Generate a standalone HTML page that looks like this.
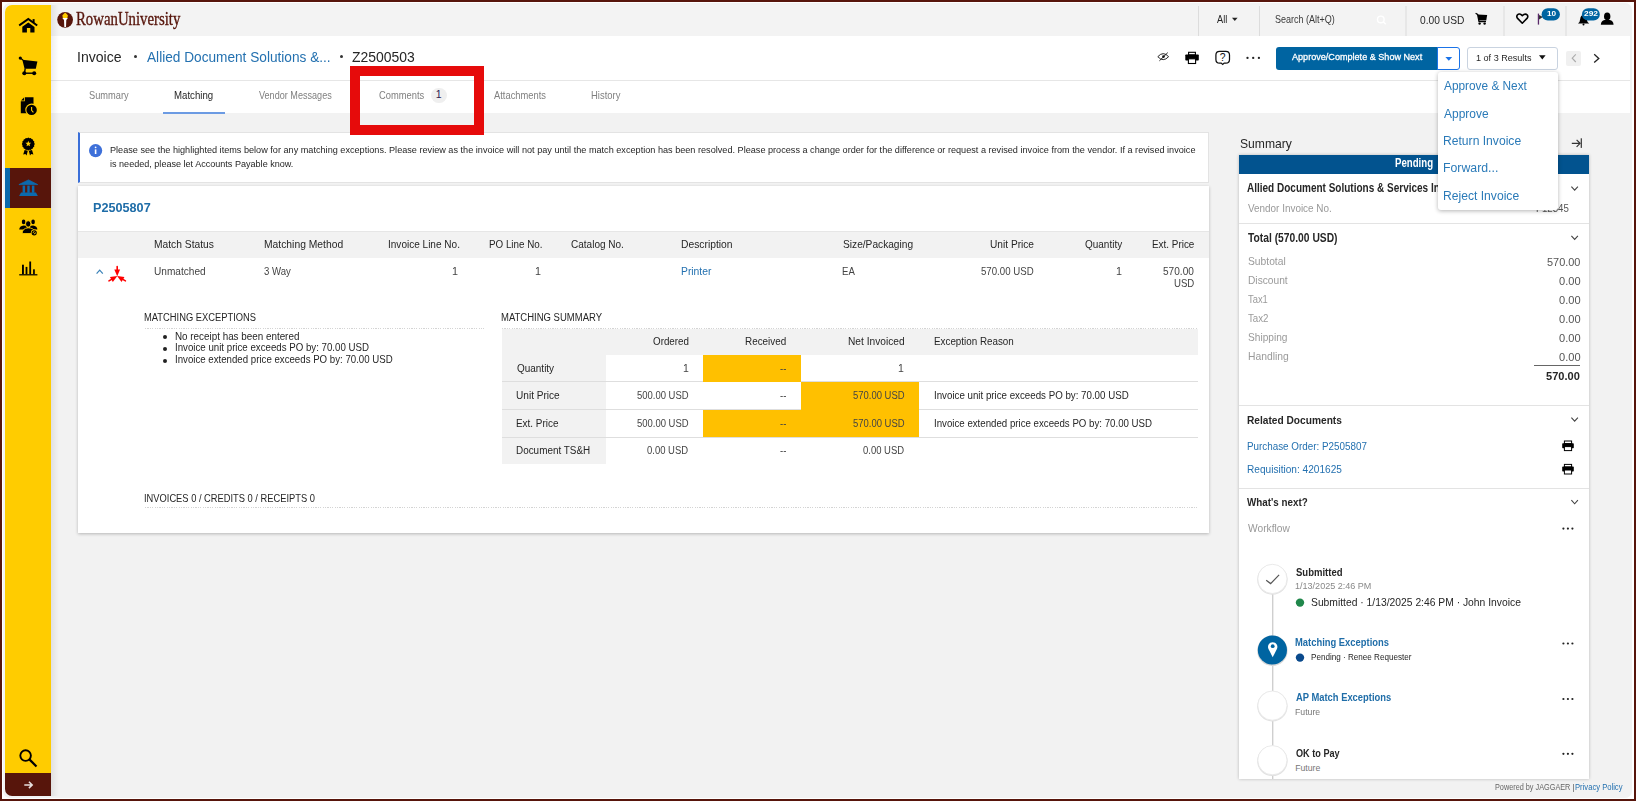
<!DOCTYPE html><html><head><meta charset="utf-8"><style>html,body{margin:0;padding:0;width:1636px;height:801px;overflow:hidden;position:relative}</style></head><body><div style="position:absolute;left:0px;top:0px;width:1636px;height:801px;background:#fff"></div>
<div style="position:absolute;left:3px;top:3px;width:1629px;height:795px;background:#f2f2f2;border-radius:7px"></div>
<div style="position:absolute;left:0px;top:0px;width:1636px;height:2px;background:#57150b"></div>
<div style="position:absolute;left:0px;top:799px;width:1636px;height:2px;background:#57150b"></div>
<div style="position:absolute;left:0px;top:0px;width:2px;height:801px;background:#57150b"></div>
<div style="position:absolute;left:1634px;top:0px;width:2px;height:801px;background:#57150b"></div>
<div style="position:absolute;left:51px;top:5px;width:1579px;height:31px;background:#f3f3f3;border-top-right-radius:6px"></div>
<div style="position:absolute;left:51px;top:36px;width:1579px;height:77px;background:#fff"></div>
<div style="position:absolute;left:51px;top:80px;width:1579px;height:1px;background:#e6e6e6"></div>
<div style="position:absolute;left:51px;top:113px;width:1579px;height:684px;background:#f2f2f2;border-bottom-right-radius:6px"></div>
<div style="position:absolute;left:5px;top:5px;width:46px;height:768px;background:#ffcc00;border-radius:7px 0 0 0"></div>
<div style="position:absolute;left:5px;top:168px;width:46px;height:40px;background:#57150b"></div>
<div style="position:absolute;left:5px;top:168px;width:5px;height:40px;background:#0b69ad"></div>
<div style="position:absolute;left:5px;top:773px;width:46px;height:23px;background:#57150b;border-bottom-left-radius:7px"></div>
<div style="position:absolute;left:51px;top:5px;width:8px;height:791px;background:linear-gradient(to right,rgba(0,0,0,0.07),rgba(0,0,0,0))"></div>
<div style="position:absolute;left:78px;top:132px;width:1131px;height:51px;background:#fff;border:1px solid #e3e3e3;border-left:2px solid #3a6fd8;box-sizing:border-box"></div>
<div style="position:absolute;left:78px;top:186px;width:1131px;height:347px;background:#fff;box-shadow:0 1px 3px rgba(0,0,0,0.25)"></div>
<div style="position:absolute;left:1239px;top:155px;width:350px;height:624px;background:#fff;box-shadow:0 0 3px rgba(0,0,0,0.25)"></div>
<div style="position:absolute;left:1239px;top:155px;width:350px;height:19px;background:#02538f"></div>
<div style="position:absolute;left:1276px;top:47px;width:162px;height:23px;background:#0064a1;border-radius:3px 0 0 3px"></div>
<div style="position:absolute;left:1437px;top:47px;width:23px;height:23px;background:#fff;border:1.5px solid #1a73e8;border-radius:0 3px 3px 0;box-sizing:border-box"></div>
<div style="position:absolute;left:1467px;top:47px;width:91px;height:23px;background:#fff;border:1px solid #c9d3e0;border-radius:3px;box-sizing:border-box"></div>
<div style="position:absolute;left:1566px;top:51px;width:15px;height:15px;background:#f0f0f0;border-radius:2px"></div>
<div style="position:absolute;left:78px;top:231px;width:1131px;height:1px;background:#e6e6e6"></div>
<div style="position:absolute;left:78px;top:232px;width:1131px;height:26px;background:#f2f2f2"></div>
<div style="position:absolute;left:145px;top:328px;width:339px;height:1px;background:repeating-linear-gradient(to right,#d4d4d4 0 1.2px,transparent 1.2px 2.4px)"></div>
<div style="position:absolute;left:502px;top:328px;width:696px;height:1px;background:repeating-linear-gradient(to right,#d4d4d4 0 1.2px,transparent 1.2px 2.4px)"></div>
<div style="position:absolute;left:145px;top:507px;width:1053px;height:1px;background:repeating-linear-gradient(to right,#d4d4d4 0 1.2px,transparent 1.2px 2.4px)"></div>
<div style="position:absolute;left:502px;top:329px;width:696px;height:26px;background:#f2f2f2"></div>
<div style="position:absolute;left:502px;top:355px;width:104px;height:109px;background:#f2f2f2"></div>
<div style="position:absolute;left:502px;top:381px;width:696px;height:1px;background:#dedede"></div>
<div style="position:absolute;left:502px;top:409px;width:696px;height:1px;background:#dedede"></div>
<div style="position:absolute;left:502px;top:437px;width:696px;height:1px;background:#dedede"></div>
<div style="position:absolute;left:703px;top:355px;width:98px;height:27px;background:#ffc000"></div>
<div style="position:absolute;left:801px;top:382px;width:118px;height:28px;background:#ffc000"></div>
<div style="position:absolute;left:703px;top:410px;width:216px;height:27px;background:#ffc000"></div>
<div style="position:absolute;left:1239px;top:223px;width:350px;height:1px;background:#e3e3e3"></div>
<div style="position:absolute;left:1239px;top:405px;width:350px;height:1px;background:#e3e3e3"></div>
<div style="position:absolute;left:1239px;top:488px;width:350px;height:1px;background:#e3e3e3"></div>
<div style="position:absolute;left:76.27px;top:6.63px;font-family:'Liberation Serif',serif;font-size:18.00px;line-height:25px;font-weight:normal;color:#57150b;white-space:nowrap;transform:scaleX(0.8220);transform-origin:0 0;-webkit-text-stroke:0.35px #57150b;">RowanUniversity</div>
<div style="position:absolute;left:1217.38px;top:12.67px;font-family:'Liberation Sans',sans-serif;font-size:10.17px;line-height:14px;font-weight:normal;color:#262626;white-space:nowrap;transform:scaleX(0.9051);transform-origin:0 0;">All</div>
<div style="position:absolute;left:1274.59px;top:12.67px;font-family:'Liberation Sans',sans-serif;font-size:10.17px;line-height:14px;font-weight:normal;color:#3a3a3a;white-space:nowrap;transform:scaleX(0.8875);transform-origin:0 0;">Search (Alt+Q)</div>
<div style="position:absolute;left:1419.60px;top:11.72px;font-family:'Liberation Sans',sans-serif;font-size:11.19px;line-height:16px;font-weight:normal;color:#262626;white-space:nowrap;transform:scaleX(0.9148);transform-origin:0 0;">0.00 USD</div>
<div style="position:absolute;left:77.00px;top:45.91px;font-family:'Liberation Sans',sans-serif;font-size:15.26px;line-height:21px;font-weight:normal;color:#262626;white-space:nowrap;transform:scaleX(0.9229);transform-origin:0 0;">Invoice</div>
<div style="position:absolute;left:147.47px;top:45.91px;font-family:'Liberation Sans',sans-serif;font-size:15.26px;line-height:21px;font-weight:normal;color:#2471b0;white-space:nowrap;transform:scaleX(0.8952);transform-origin:0 0;">Allied Document Solutions &amp;...</div>
<div style="position:absolute;left:352.26px;top:45.91px;font-family:'Liberation Sans',sans-serif;font-size:15.26px;line-height:21px;font-weight:normal;color:#262626;white-space:nowrap;transform:scaleX(0.9144);transform-origin:0 0;">Z2500503</div>
<div style="position:absolute;left:133.8px;top:55.3px;width:3px;height:3px;background:#333;border-radius:50%"></div>
<div style="position:absolute;left:340.2px;top:55.3px;width:3px;height:3px;background:#333;border-radius:50%"></div>
<div style="position:absolute;left:89.38px;top:88.52px;font-family:'Liberation Sans',sans-serif;font-size:10.03px;line-height:14px;font-weight:normal;color:#808080;white-space:nowrap;transform:scaleX(0.9238);transform-origin:0 0;">Summary</div>
<div style="position:absolute;left:174.21px;top:88.52px;font-family:'Liberation Sans',sans-serif;font-size:10.03px;line-height:14px;font-weight:normal;color:#262626;white-space:nowrap;transform:scaleX(0.9637);transform-origin:0 0;">Matching</div>
<div style="position:absolute;left:258.96px;top:88.52px;font-family:'Liberation Sans',sans-serif;font-size:10.03px;line-height:14px;font-weight:normal;color:#808080;white-space:nowrap;transform:scaleX(0.9076);transform-origin:0 0;">Vendor Messages</div>
<div style="position:absolute;left:378.53px;top:88.52px;font-family:'Liberation Sans',sans-serif;font-size:10.03px;line-height:14px;font-weight:normal;color:#808080;white-space:nowrap;transform:scaleX(0.9325);transform-origin:0 0;">Comments</div>
<div style="position:absolute;left:493.68px;top:88.52px;font-family:'Liberation Sans',sans-serif;font-size:10.03px;line-height:14px;font-weight:normal;color:#808080;white-space:nowrap;transform:scaleX(0.9339);transform-origin:0 0;">Attachments</div>
<div style="position:absolute;left:591.23px;top:88.52px;font-family:'Liberation Sans',sans-serif;font-size:10.03px;line-height:14px;font-weight:normal;color:#808080;white-space:nowrap;transform:scaleX(0.9420);transform-origin:0 0;">History</div>
<div style="position:absolute;left:431px;top:87.5px;width:15.5px;height:15.5px;background:#efefef;border-radius:50%"></div>
<div style="position:absolute;left:435.65px;top:87.27px;font-family:'Liberation Sans',sans-serif;font-size:10.47px;line-height:15px;font-weight:normal;color:#2e2250;white-space:nowrap;">1</div>
<div style="position:absolute;left:163px;top:112px;width:62px;height:2px;background:#6c9be3"></div>
<div style="position:absolute;left:1291.98px;top:50.37px;font-family:'Liberation Sans',sans-serif;font-size:9.88px;line-height:14px;font-weight:normal;color:#ffffff;white-space:nowrap;transform:scaleX(0.9192);transform-origin:0 0;-webkit-text-stroke:0.3px #fff;">Approve/Complete &amp; Show Next</div>
<div style="position:absolute;left:1476.21px;top:50.67px;font-family:'Liberation Sans',sans-serif;font-size:9.59px;line-height:13px;font-weight:normal;color:#262626;white-space:nowrap;transform:scaleX(0.9466);transform-origin:0 0;">1 of 3 Results</div>
<div style="position:absolute;left:110.05px;top:142.77px;font-family:'Liberation Sans',sans-serif;font-size:9.88px;line-height:14px;font-weight:normal;color:#262626;white-space:nowrap;transform:scaleX(0.9242);transform-origin:0 0;">Please see the highlighted items below for any matching exceptions. Please review as the invoice will not pay until the match exception has been resolved. Please process a change order for the difference or request a revised invoice from the vendor. If a revised invoice</div>
<div style="position:absolute;left:110.19px;top:156.52px;font-family:'Liberation Sans',sans-serif;font-size:9.74px;line-height:14px;font-weight:normal;color:#262626;white-space:nowrap;transform:scaleX(0.9308);transform-origin:0 0;">is needed, please let Accounts Payable know.</div>
<div style="position:absolute;left:92.85px;top:198.21px;font-family:'Liberation Sans',sans-serif;font-size:13.23px;line-height:19px;font-weight:bold;color:#1f6da8;white-space:nowrap;transform:scaleX(0.9567);transform-origin:0 0;">P2505807</div>
<div style="position:absolute;left:153.66px;top:235.95px;font-family:'Liberation Sans',sans-serif;font-size:11.40px;line-height:16px;font-weight:normal;color:#262626;white-space:nowrap;transform:scaleX(0.9009);transform-origin:0 0;">Match Status</div>
<div style="position:absolute;left:263.95px;top:235.95px;font-family:'Liberation Sans',sans-serif;font-size:11.40px;line-height:16px;font-weight:normal;color:#262626;white-space:nowrap;transform:scaleX(0.9062);transform-origin:0 0;">Matching Method</div>
<div style="position:absolute;left:387.57px;top:235.95px;font-family:'Liberation Sans',sans-serif;font-size:11.40px;line-height:16px;font-weight:normal;color:#262626;white-space:nowrap;transform:scaleX(0.8804);transform-origin:0 0;">Invoice Line No.</div>
<div style="position:absolute;left:488.79px;top:235.95px;font-family:'Liberation Sans',sans-serif;font-size:11.40px;line-height:16px;font-weight:normal;color:#262626;white-space:nowrap;transform:scaleX(0.8619);transform-origin:0 0;">PO Line No.</div>
<div style="position:absolute;left:571.49px;top:235.95px;font-family:'Liberation Sans',sans-serif;font-size:11.40px;line-height:16px;font-weight:normal;color:#262626;white-space:nowrap;transform:scaleX(0.8795);transform-origin:0 0;">Catalog No.</div>
<div style="position:absolute;left:681.35px;top:235.95px;font-family:'Liberation Sans',sans-serif;font-size:11.40px;line-height:16px;font-weight:normal;color:#262626;white-space:nowrap;transform:scaleX(0.9056);transform-origin:0 0;">Description</div>
<div style="position:absolute;left:842.54px;top:235.95px;font-family:'Liberation Sans',sans-serif;font-size:11.40px;line-height:16px;font-weight:normal;color:#262626;white-space:nowrap;transform:scaleX(0.8927);transform-origin:0 0;">Size/Packaging</div>
<div style="position:absolute;left:989.82px;top:235.95px;font-family:'Liberation Sans',sans-serif;font-size:11.40px;line-height:16px;font-weight:normal;color:#262626;white-space:nowrap;transform:scaleX(0.8915);transform-origin:0 0;">Unit Price</div>
<div style="position:absolute;left:1084.53px;top:235.95px;font-family:'Liberation Sans',sans-serif;font-size:11.40px;line-height:16px;font-weight:normal;color:#262626;white-space:nowrap;transform:scaleX(0.8764);transform-origin:0 0;">Quantity</div>
<div style="position:absolute;left:1151.89px;top:235.95px;font-family:'Liberation Sans',sans-serif;font-size:11.40px;line-height:16px;font-weight:normal;color:#262626;white-space:nowrap;transform:scaleX(0.8686);transform-origin:0 0;">Ext. Price</div>
<div style="position:absolute;left:153.72px;top:262.97px;font-family:'Liberation Sans',sans-serif;font-size:11.34px;line-height:16px;font-weight:normal;color:#444;white-space:nowrap;transform:scaleX(0.8923);transform-origin:0 0;">Unmatched</div>
<div style="position:absolute;left:264.43px;top:262.97px;font-family:'Liberation Sans',sans-serif;font-size:11.34px;line-height:16px;font-weight:normal;color:#444;white-space:nowrap;transform:scaleX(0.8461);transform-origin:0 0;">3 Way</div>
<div style="position:absolute;left:452.44px;top:262.97px;font-family:'Liberation Sans',sans-serif;font-size:11.34px;line-height:16px;font-weight:normal;color:#444;white-space:nowrap;transform:scaleX(0.9500);transform-origin:0 0;">1</div>
<div style="position:absolute;left:535.44px;top:262.97px;font-family:'Liberation Sans',sans-serif;font-size:11.34px;line-height:16px;font-weight:normal;color:#444;white-space:nowrap;transform:scaleX(0.9500);transform-origin:0 0;">1</div>
<div style="position:absolute;left:681.35px;top:262.97px;font-family:'Liberation Sans',sans-serif;font-size:11.34px;line-height:16px;font-weight:normal;color:#2471b0;white-space:nowrap;transform:scaleX(0.9110);transform-origin:0 0;">Printer</div>
<div style="position:absolute;left:842.21px;top:262.97px;font-family:'Liberation Sans',sans-serif;font-size:11.34px;line-height:16px;font-weight:normal;color:#444;white-space:nowrap;transform:scaleX(0.8468);transform-origin:0 0;">EA</div>
<div style="position:absolute;left:981.21px;top:262.97px;font-family:'Liberation Sans',sans-serif;font-size:11.34px;line-height:16px;font-weight:normal;color:#444;white-space:nowrap;transform:scaleX(0.8525);transform-origin:0 0;">570.00 USD</div>
<div style="position:absolute;left:1116.24px;top:262.97px;font-family:'Liberation Sans',sans-serif;font-size:11.34px;line-height:16px;font-weight:normal;color:#444;white-space:nowrap;transform:scaleX(0.9500);transform-origin:0 0;">1</div>
<div style="position:absolute;left:1163.30px;top:262.97px;font-family:'Liberation Sans',sans-serif;font-size:11.34px;line-height:16px;font-weight:normal;color:#444;white-space:nowrap;transform:scaleX(0.8911);transform-origin:0 0;">570.00</div>
<div style="position:absolute;left:1173.96px;top:274.67px;font-family:'Liberation Sans',sans-serif;font-size:11.34px;line-height:16px;font-weight:normal;color:#444;white-space:nowrap;transform:scaleX(0.8482);transform-origin:0 0;">USD</div>
<div style="position:absolute;left:144.03px;top:310.07px;font-family:'Liberation Sans',sans-serif;font-size:11.05px;line-height:15px;font-weight:normal;color:#262626;white-space:nowrap;transform:scaleX(0.8462);transform-origin:0 0;">MATCHING EXCEPTIONS</div>
<div style="position:absolute;left:175.19px;top:329.52px;font-family:'Liberation Sans',sans-serif;font-size:10.32px;line-height:14px;font-weight:normal;color:#262626;white-space:nowrap;transform:scaleX(0.9556);transform-origin:0 0;">No receipt has been entered</div>
<div style="position:absolute;left:163.3px;top:335.4px;width:4px;height:4px;background:#222;border-radius:50%"></div>
<div style="position:absolute;left:175.10px;top:341.42px;font-family:'Liberation Sans',sans-serif;font-size:10.32px;line-height:14px;font-weight:normal;color:#262626;white-space:nowrap;transform:scaleX(0.9402);transform-origin:0 0;">Invoice unit price exceeds PO by: 70.00 USD</div>
<div style="position:absolute;left:163.3px;top:347.29999999999995px;width:4px;height:4px;background:#222;border-radius:50%"></div>
<div style="position:absolute;left:175.11px;top:353.32px;font-family:'Liberation Sans',sans-serif;font-size:10.32px;line-height:14px;font-weight:normal;color:#262626;white-space:nowrap;transform:scaleX(0.9377);transform-origin:0 0;">Invoice extended price exceeds PO by: 70.00 USD</div>
<div style="position:absolute;left:163.3px;top:359.2px;width:4px;height:4px;background:#222;border-radius:50%"></div>
<div style="position:absolute;left:500.92px;top:310.07px;font-family:'Liberation Sans',sans-serif;font-size:11.05px;line-height:15px;font-weight:normal;color:#262626;white-space:nowrap;transform:scaleX(0.8602);transform-origin:0 0;">MATCHING SUMMARY</div>
<div style="position:absolute;left:652.74px;top:333.17px;font-family:'Liberation Sans',sans-serif;font-size:11.34px;line-height:16px;font-weight:normal;color:#262626;white-space:nowrap;transform:scaleX(0.8655);transform-origin:0 0;">Ordered</div>
<div style="position:absolute;left:744.89px;top:333.17px;font-family:'Liberation Sans',sans-serif;font-size:11.34px;line-height:16px;font-weight:normal;color:#262626;white-space:nowrap;transform:scaleX(0.8727);transform-origin:0 0;">Received</div>
<div style="position:absolute;left:847.86px;top:333.17px;font-family:'Liberation Sans',sans-serif;font-size:11.34px;line-height:16px;font-weight:normal;color:#262626;white-space:nowrap;transform:scaleX(0.8980);transform-origin:0 0;">Net Invoiced</div>
<div style="position:absolute;left:933.79px;top:333.17px;font-family:'Liberation Sans',sans-serif;font-size:11.34px;line-height:16px;font-weight:normal;color:#262626;white-space:nowrap;transform:scaleX(0.8677);transform-origin:0 0;">Exception Reason</div>
<div style="position:absolute;left:516.53px;top:360.67px;font-family:'Liberation Sans',sans-serif;font-size:11.05px;line-height:15px;font-weight:normal;color:#262626;white-space:nowrap;transform:scaleX(0.9016);transform-origin:0 0;">Quantity</div>
<div style="position:absolute;left:682.68px;top:360.67px;font-family:'Liberation Sans',sans-serif;font-size:11.05px;line-height:15px;font-weight:normal;color:#444;white-space:nowrap;transform:scaleX(0.9500);transform-origin:0 0;">1</div>
<div style="position:absolute;left:779.58px;top:360.67px;font-family:'Liberation Sans',sans-serif;font-size:11.05px;line-height:15px;font-weight:normal;color:#444;white-space:nowrap;transform:scaleX(0.8627);transform-origin:0 0;">--</div>
<div style="position:absolute;left:898.48px;top:360.67px;font-family:'Liberation Sans',sans-serif;font-size:11.05px;line-height:15px;font-weight:normal;color:#444;white-space:nowrap;transform:scaleX(0.9500);transform-origin:0 0;">1</div>
<div style="position:absolute;left:516.22px;top:387.77px;font-family:'Liberation Sans',sans-serif;font-size:11.05px;line-height:15px;font-weight:normal;color:#262626;white-space:nowrap;transform:scaleX(0.9132);transform-origin:0 0;">Unit Price</div>
<div style="position:absolute;left:636.92px;top:387.77px;font-family:'Liberation Sans',sans-serif;font-size:11.05px;line-height:15px;font-weight:normal;color:#444;white-space:nowrap;transform:scaleX(0.8563);transform-origin:0 0;">500.00 USD</div>
<div style="position:absolute;left:779.58px;top:387.77px;font-family:'Liberation Sans',sans-serif;font-size:11.05px;line-height:15px;font-weight:normal;color:#444;white-space:nowrap;transform:scaleX(0.8627);transform-origin:0 0;">--</div>
<div style="position:absolute;left:852.72px;top:387.77px;font-family:'Liberation Sans',sans-serif;font-size:11.05px;line-height:15px;font-weight:normal;color:#444;white-space:nowrap;transform:scaleX(0.8563);transform-origin:0 0;">570.00 USD</div>
<div style="position:absolute;left:933.70px;top:387.77px;font-family:'Liberation Sans',sans-serif;font-size:11.05px;line-height:15px;font-weight:normal;color:#262626;white-space:nowrap;transform:scaleX(0.8807);transform-origin:0 0;">Invoice unit price exceeds PO by: 70.00 USD</div>
<div style="position:absolute;left:516.19px;top:415.77px;font-family:'Liberation Sans',sans-serif;font-size:11.05px;line-height:15px;font-weight:normal;color:#262626;white-space:nowrap;transform:scaleX(0.8982);transform-origin:0 0;">Ext. Price</div>
<div style="position:absolute;left:636.92px;top:415.77px;font-family:'Liberation Sans',sans-serif;font-size:11.05px;line-height:15px;font-weight:normal;color:#444;white-space:nowrap;transform:scaleX(0.8563);transform-origin:0 0;">500.00 USD</div>
<div style="position:absolute;left:779.58px;top:415.77px;font-family:'Liberation Sans',sans-serif;font-size:11.05px;line-height:15px;font-weight:normal;color:#444;white-space:nowrap;transform:scaleX(0.8627);transform-origin:0 0;">--</div>
<div style="position:absolute;left:852.72px;top:415.77px;font-family:'Liberation Sans',sans-serif;font-size:11.05px;line-height:15px;font-weight:normal;color:#444;white-space:nowrap;transform:scaleX(0.8563);transform-origin:0 0;">570.00 USD</div>
<div style="position:absolute;left:933.71px;top:415.77px;font-family:'Liberation Sans',sans-serif;font-size:11.05px;line-height:15px;font-weight:normal;color:#262626;white-space:nowrap;transform:scaleX(0.8768);transform-origin:0 0;">Invoice extended price exceeds PO by: 70.00 USD</div>
<div style="position:absolute;left:516.19px;top:442.77px;font-family:'Liberation Sans',sans-serif;font-size:11.05px;line-height:15px;font-weight:normal;color:#262626;white-space:nowrap;transform:scaleX(0.8968);transform-origin:0 0;">Document TS&amp;H</div>
<div style="position:absolute;left:647.43px;top:442.77px;font-family:'Liberation Sans',sans-serif;font-size:11.05px;line-height:15px;font-weight:normal;color:#444;white-space:nowrap;transform:scaleX(0.8566);transform-origin:0 0;">0.00 USD</div>
<div style="position:absolute;left:779.58px;top:442.77px;font-family:'Liberation Sans',sans-serif;font-size:11.05px;line-height:15px;font-weight:normal;color:#444;white-space:nowrap;transform:scaleX(0.8627);transform-origin:0 0;">--</div>
<div style="position:absolute;left:863.23px;top:442.77px;font-family:'Liberation Sans',sans-serif;font-size:11.05px;line-height:15px;font-weight:normal;color:#444;white-space:nowrap;transform:scaleX(0.8566);transform-origin:0 0;">0.00 USD</div>
<div style="position:absolute;left:143.74px;top:489.62px;font-family:'Liberation Sans',sans-serif;font-size:11.48px;line-height:16px;font-weight:normal;color:#262626;white-space:nowrap;transform:scaleX(0.8127);transform-origin:0 0;">INVOICES 0 / CREDITS 0 / RECEIPTS 0</div>
<div style="position:absolute;left:1239.65px;top:135.02px;font-family:'Liberation Sans',sans-serif;font-size:12.94px;line-height:18px;font-weight:normal;color:#262626;white-space:nowrap;transform:scaleX(0.9373);transform-origin:0 0;">Summary</div>
<div style="position:absolute;left:1394.95px;top:155.22px;font-family:'Liberation Sans',sans-serif;font-size:12.06px;line-height:17px;font-weight:bold;color:#ffffff;white-space:nowrap;transform:scaleX(0.8005);transform-origin:0 0;">Pending</div>
<div style="position:absolute;left:1247.35px;top:180.47px;font-family:'Liberation Sans',sans-serif;font-size:11.92px;line-height:17px;font-weight:bold;color:#262626;white-space:nowrap;transform:scaleX(0.8400);transform-origin:0 0;">Allied Document Solutions &amp; Services Inc.</div>
<div style="position:absolute;left:1247.56px;top:200.77px;font-family:'Liberation Sans',sans-serif;font-size:10.76px;line-height:15px;font-weight:normal;color:#999;white-space:nowrap;transform:scaleX(0.9221);transform-origin:0 0;">Vendor Invoice No.</div>
<div style="position:absolute;left:1535.78px;top:200.77px;font-family:'Liberation Sans',sans-serif;font-size:10.76px;line-height:15px;font-weight:normal;color:#555;white-space:nowrap;transform:scaleX(0.9000);transform-origin:0 0;">F12345</div>
<div style="position:absolute;left:1248.28px;top:229.62px;font-family:'Liberation Sans',sans-serif;font-size:12.06px;line-height:17px;font-weight:bold;color:#262626;white-space:nowrap;transform:scaleX(0.8537);transform-origin:0 0;">Total (570.00 USD)</div>
<div style="position:absolute;left:1247.93px;top:253.02px;font-family:'Liberation Sans',sans-serif;font-size:11.48px;line-height:16px;font-weight:normal;color:#9a9a9a;white-space:nowrap;transform:scaleX(0.8961);transform-origin:0 0;">Subtotal</div>
<div style="position:absolute;left:1546.76px;top:254.12px;font-family:'Liberation Sans',sans-serif;font-size:11.48px;line-height:16px;font-weight:normal;color:#555;white-space:nowrap;transform:scaleX(0.9529);transform-origin:0 0;">570.00</div>
<div style="position:absolute;left:1247.56px;top:271.92px;font-family:'Liberation Sans',sans-serif;font-size:11.48px;line-height:16px;font-weight:normal;color:#9a9a9a;white-space:nowrap;transform:scaleX(0.8889);transform-origin:0 0;">Discount</div>
<div style="position:absolute;left:1558.67px;top:273.02px;font-family:'Liberation Sans',sans-serif;font-size:11.48px;line-height:16px;font-weight:normal;color:#555;white-space:nowrap;transform:scaleX(0.9650);transform-origin:0 0;">0.00</div>
<div style="position:absolute;left:1248.19px;top:290.82px;font-family:'Liberation Sans',sans-serif;font-size:11.48px;line-height:16px;font-weight:normal;color:#9a9a9a;white-space:nowrap;transform:scaleX(0.8175);transform-origin:0 0;">Tax1</div>
<div style="position:absolute;left:1558.67px;top:291.92px;font-family:'Liberation Sans',sans-serif;font-size:11.48px;line-height:16px;font-weight:normal;color:#555;white-space:nowrap;transform:scaleX(0.9650);transform-origin:0 0;">0.00</div>
<div style="position:absolute;left:1248.18px;top:309.72px;font-family:'Liberation Sans',sans-serif;font-size:11.48px;line-height:16px;font-weight:normal;color:#9a9a9a;white-space:nowrap;transform:scaleX(0.8464);transform-origin:0 0;">Tax2</div>
<div style="position:absolute;left:1558.67px;top:310.82px;font-family:'Liberation Sans',sans-serif;font-size:11.48px;line-height:16px;font-weight:normal;color:#555;white-space:nowrap;transform:scaleX(0.9650);transform-origin:0 0;">0.00</div>
<div style="position:absolute;left:1247.94px;top:328.62px;font-family:'Liberation Sans',sans-serif;font-size:11.48px;line-height:16px;font-weight:normal;color:#9a9a9a;white-space:nowrap;transform:scaleX(0.8842);transform-origin:0 0;">Shipping</div>
<div style="position:absolute;left:1558.67px;top:329.72px;font-family:'Liberation Sans',sans-serif;font-size:11.48px;line-height:16px;font-weight:normal;color:#555;white-space:nowrap;transform:scaleX(0.9650);transform-origin:0 0;">0.00</div>
<div style="position:absolute;left:1247.55px;top:347.52px;font-family:'Liberation Sans',sans-serif;font-size:11.48px;line-height:16px;font-weight:normal;color:#9a9a9a;white-space:nowrap;transform:scaleX(0.9005);transform-origin:0 0;">Handling</div>
<div style="position:absolute;left:1558.67px;top:348.62px;font-family:'Liberation Sans',sans-serif;font-size:11.48px;line-height:16px;font-weight:normal;color:#555;white-space:nowrap;transform:scaleX(0.9650);transform-origin:0 0;">0.00</div>
<div style="position:absolute;left:1534px;top:365px;width:46px;height:1px;background:#666"></div>
<div style="position:absolute;left:1546.46px;top:368.07px;font-family:'Liberation Sans',sans-serif;font-size:11.34px;line-height:16px;font-weight:bold;color:#262626;white-space:nowrap;transform:scaleX(0.9745);transform-origin:0 0;">570.00</div>
<div style="position:absolute;left:1246.72px;top:412.07px;font-family:'Liberation Sans',sans-serif;font-size:11.63px;line-height:16px;font-weight:bold;color:#262626;white-space:nowrap;transform:scaleX(0.8742);transform-origin:0 0;">Related Documents</div>
<div style="position:absolute;left:1247.09px;top:437.77px;font-family:'Liberation Sans',sans-serif;font-size:11.63px;line-height:16px;font-weight:normal;color:#2471b0;white-space:nowrap;transform:scaleX(0.8470);transform-origin:0 0;">Purchase Order: P2505807</div>
<div style="position:absolute;left:1247.07px;top:461.42px;font-family:'Liberation Sans',sans-serif;font-size:11.77px;line-height:16px;font-weight:normal;color:#2471b0;white-space:nowrap;transform:scaleX(0.8584);transform-origin:0 0;">Requisition: 4201625</div>
<div style="position:absolute;left:1247.39px;top:494.47px;font-family:'Liberation Sans',sans-serif;font-size:11.63px;line-height:16px;font-weight:bold;color:#262626;white-space:nowrap;transform:scaleX(0.8440);transform-origin:0 0;">What's next?</div>
<div style="position:absolute;left:1247.96px;top:520.27px;font-family:'Liberation Sans',sans-serif;font-size:11.63px;line-height:16px;font-weight:normal;color:#999;white-space:nowrap;transform:scaleX(0.8790);transform-origin:0 0;">Workflow</div>
<div style="position:absolute;left:1295.63px;top:563.62px;font-family:'Liberation Sans',sans-serif;font-size:11.48px;line-height:16px;font-weight:bold;color:#262626;white-space:nowrap;transform:scaleX(0.8302);transform-origin:0 0;">Submitted</div>
<div style="position:absolute;left:1295.21px;top:580.27px;font-family:'Liberation Sans',sans-serif;font-size:9.30px;line-height:13px;font-weight:normal;color:#888;white-space:nowrap;transform:scaleX(0.9723);transform-origin:0 0;">1/13/2025 2:46 PM</div>
<div style="position:absolute;left:1310.83px;top:594.02px;font-family:'Liberation Sans',sans-serif;font-size:11.48px;line-height:16px;font-weight:normal;color:#262626;white-space:nowrap;transform:scaleX(0.8995);transform-origin:0 0;">Submitted · 1/13/2025 2:46 PM · John Invoice</div>
<div style="position:absolute;left:1295.27px;top:634.07px;font-family:'Liberation Sans',sans-serif;font-size:11.63px;line-height:16px;font-weight:bold;color:#1f6da8;white-space:nowrap;transform:scaleX(0.8084);transform-origin:0 0;">Matching Exceptions</div>
<div style="position:absolute;left:1310.63px;top:650.83px;font-family:'Liberation Sans',sans-serif;font-size:9.16px;line-height:13px;font-weight:normal;color:#262626;white-space:nowrap;transform:scaleX(0.8853);transform-origin:0 0;">Pending · Renee Requester</div>
<div style="position:absolute;left:1295.67px;top:689.37px;font-family:'Liberation Sans',sans-serif;font-size:11.34px;line-height:16px;font-weight:bold;color:#1f6da8;white-space:nowrap;transform:scaleX(0.8277);transform-origin:0 0;">AP Match Exceptions</div>
<div style="position:absolute;left:1295.18px;top:707.28px;font-family:'Liberation Sans',sans-serif;font-size:8.14px;line-height:11px;font-weight:normal;color:#777;white-space:nowrap;transform:scaleX(1.0713);transform-origin:0 0;">Future</div>
<div style="position:absolute;left:1295.53px;top:744.97px;font-family:'Liberation Sans',sans-serif;font-size:11.63px;line-height:16px;font-weight:bold;color:#262626;white-space:nowrap;transform:scaleX(0.7851);transform-origin:0 0;">OK to Pay</div>
<div style="position:absolute;left:1295.18px;top:761.98px;font-family:'Liberation Sans',sans-serif;font-size:8.72px;line-height:12px;font-weight:normal;color:#777;white-space:nowrap;">Future</div>
<div style="position:absolute;left:1495.10px;top:781.43px;font-family:'Liberation Sans',sans-serif;font-size:8.87px;line-height:12px;font-weight:normal;color:#666;white-space:nowrap;transform:scaleX(0.8231);transform-origin:0 0;">Powered by JAGGAER</div>
<div style="position:absolute;left:1572.8px;top:783.6px;width:0.9px;height:8.4px;background:#888"></div>
<div style="position:absolute;left:1575.27px;top:781.43px;font-family:'Liberation Sans',sans-serif;font-size:8.87px;line-height:12px;font-weight:normal;color:#2471b0;white-space:nowrap;transform:scaleX(0.8616);transform-origin:0 0;">Privacy Policy</div>
<svg style="position:absolute;left:0;top:0" width="1636" height="801" viewBox="0 0 1636 801"><path d="M20 24.9 L28.3 18.9 L36.4 24.9" fill="none" stroke="#000" stroke-width="2" stroke-linecap="square" stroke-linejoin="miter"/><rect x="32.6" y="19.1" width="2" height="3.6" fill="#000"/><path d="M22.3 26.8 L28.3 22.4 L34.5 26.9 L34.5 32.6 L30.3 32.6 L30.3 27.9 L26.9 27.9 L26.9 32.6 L22.3 32.6 Z" fill="#000"/><circle cx="20.3" cy="58.1" r="1.6" fill="#000"/><path d="M20.5 58.3 L23 60" stroke="#000" stroke-width="1.3"/><path d="M22.3 59.7 L37.4 61.5 L35.8 68.7 L24.6 68.7 Z" fill="#000"/><path d="M25.2 68.5 L24.5 73" stroke="#000" stroke-width="1.4"/><circle cx="24.3" cy="73.3" r="2" fill="#000"/><circle cx="34.2" cy="73.2" r="2" fill="#000"/><path d="M24.3 73.2 L34.2 73.2" stroke="#000" stroke-width="1.4"/><defs><mask id="dm"><rect x="0" y="0" width="60" height="801" fill="#fff"/><circle cx="31.6" cy="109.9" r="6.3" fill="#000"/></mask></defs><path d="M24.8 97.2 L33.5 97.2 L33.5 113.3 L20.8 113.3 L20.8 101.2 L24.8 101.2 Z" fill="#000" mask="url(#dm)"/><path d="M21.0 100.4 L24.0 97.4 L24.0 100.4 Z" fill="#000"/><circle cx="31.6" cy="109.9" r="5.2" fill="#000"/><path d="M31.6 106.9 L31.6 110.4 L33.4 112.3" fill="none" stroke="#ffcc00" stroke-width="1.1"/><polygon points="34.80,144.00 34.09,145.15 34.31,146.49 33.21,147.28 32.90,148.60 31.58,148.91 30.79,150.01 29.45,149.79 28.30,150.50 27.15,149.79 25.81,150.01 25.02,148.91 23.70,148.60 23.39,147.28 22.29,146.49 22.51,145.15 21.80,144.00 22.51,142.85 22.29,141.51 23.39,140.72 23.70,139.40 25.02,139.09 25.81,137.99 27.15,138.21 28.30,137.50 29.45,138.21 30.79,137.99 31.58,139.09 32.90,139.40 33.21,140.72 34.31,141.51 34.09,142.85" fill="#000"/><polygon points="28.30,140.80 29.09,142.71 31.15,142.87 29.58,144.22 30.06,146.23 28.30,145.15 26.54,146.23 27.02,144.22 25.45,142.87 27.51,142.71" fill="#ffcc00"/><path d="M24.6 150 L27.8 150.8 L26.6 155.4 L25.4 154 L23.2 154.6 Z" fill="#000"/><path d="M32 150 L28.8 150.8 L30 155.4 L31.2 154 L33.4 154.6 Z" fill="#000"/><path d="M18.9 184.6 L28.5 179.9 L37.7 184.6 Z" fill="#0b69ad" stroke="#0b69ad" stroke-width="0.8" stroke-linejoin="round"/><rect x="22.6" y="185.6" width="2.5" height="7.2" fill="#0b69ad"/><rect x="27.3" y="185.6" width="2.4" height="7.2" fill="#0b69ad"/><rect x="31.9" y="185.6" width="2.5" height="7.2" fill="#0b69ad"/><path d="M21 192.6 L36 192.6 L37.8 196 L19.1 196 Z" fill="#0b69ad"/><ellipse cx="23.6" cy="221.9" rx="1.8" ry="2.3" fill="#000"/><ellipse cx="33.1" cy="221.9" rx="1.8" ry="2.3" fill="#000"/><path d="M19.2 229.6 Q19.4 225.9 23.6 225.5 Q25.8 225.6 26.8 226.6 L26.8 229.6 Z" fill="#000"/><path d="M37.4 229.6 Q37.2 225.9 33.1 225.5 Q30.9 225.6 29.9 226.6 L29.9 229.6 Z" fill="#000"/><ellipse cx="28.2" cy="223.9" rx="2.7" ry="3.2" fill="#000" stroke="#ffcc00" stroke-width="0.9"/><path d="M22.1 233.6 Q22.3 228.2 28.2 227.8 Q33.9 228 34.4 231.4 L34.4 233.6 Z" fill="#000" stroke="#ffcc00" stroke-width="0.9"/><circle cx="34.2" cy="232.8" r="3.4" fill="#ffcc00"/><circle cx="34.2" cy="232.8" r="2.6" fill="#000"/><circle cx="34.2" cy="232.8" r="1.5" fill="#ffcc00"/><path d="M32.6 234.4 L35.8 231.2" stroke="#000" stroke-width="1.1"/><rect x="19.2" y="274.2" width="18.2" height="1.2" fill="#000"/><rect x="22" y="264.7" width="1.9" height="9.6" fill="#000"/><rect x="25.6" y="266.9" width="1.8" height="7.4" fill="#000"/><rect x="29.3" y="261.5" width="1.8" height="12.8" fill="#000"/><rect x="33.1" y="269.3" width="1.7" height="5" fill="#000"/><circle cx="25.6" cy="755.6" r="5.3" fill="none" stroke="#000" stroke-width="1.9"/><path d="M29.4 759.4 L36.5 766.5" stroke="#000" stroke-width="2.2"/><path d="M24.3 784.9 L32 784.9 M28.9 781.7 L32.2 784.9 L28.9 788.1" fill="none" stroke="#e8e0df" stroke-width="1.5"/><circle cx="65.1" cy="19.85" r="8.2" fill="#fff"/><circle cx="65.1" cy="19.85" r="7.9" fill="#57150b"/><path d="M65.2 12.6 L67.9 15.2 L67.4 17.9 L62.8 17.9 L62.4 15.2 Z" fill="#ffcc00"/><path d="M62.3 17.9 L67.9 17.9 L66.3 19.9 L66 26.9 L64.3 26.9 L64 19.9 Z" fill="#fff"/><rect x="1198" y="6" width="1" height="30" fill="#dcdcdc"/><rect x="1259" y="6" width="1" height="30" fill="#dcdcdc"/><rect x="1405.5" y="6" width="1" height="30" fill="#dcdcdc"/><rect x="1503.5" y="6" width="1" height="30" fill="#dcdcdc"/><rect x="1565.5" y="6" width="1" height="30" fill="#dcdcdc"/><path d="M1232 17.8 L1237.6 17.8 L1234.8 21 Z" fill="#222"/><circle cx="1380.8" cy="19.4" r="3.3" fill="none" stroke="#fff" stroke-width="1.4"/><path d="M1383.2 21.8 L1385.8 24.3" stroke="#fff" stroke-width="1.5"/><path d="M1475.6 13.2 L1477.6 14.4 L1479 21.6 L1486 21.6" fill="none" stroke="#000" stroke-width="1.3"/><path d="M1477.6 14.6 L1487.2 15 L1486.2 20.6 L1478.8 20.6 Z" fill="#000"/><circle cx="1479.6" cy="23.6" r="1.2" fill="#000"/><circle cx="1484.6" cy="23.6" r="1.2" fill="#000"/><path d="M1522.3 23.2 L1517.6 18.4 Q1516.2 16.6 1517.3 15 Q1519.5 12.8 1522.3 15.6 Q1525.1 12.8 1527.3 15 Q1528.4 16.6 1527 18.4 Z" fill="none" stroke="#000" stroke-width="1.6" stroke-linejoin="round"/><rect x="1537.8" y="13.6" width="1.3" height="11" fill="#5a2a6a"/><path d="M1539 15 L1543 17 L1539 19.5 Z" fill="#333"/><path d="M1578 23.6 Q1580 22.4 1580.2 19 Q1580.6 15.2 1583.5 15 Q1586.5 15.2 1586.8 19 Q1587 22.4 1589.2 23.6 Z" fill="#000"/><circle cx="1583.5" cy="24.6" r="1" fill="#000"/><rect x="1541.6" y="8.2" width="18.3" height="12.4" rx="6.2" fill="#0064a1"/><rect x="1581.9" y="8.2" width="17.9" height="12.4" rx="6.2" fill="#0064a1"/><ellipse cx="1607.2" cy="16.4" rx="3.2" ry="3.8" fill="#000"/><path d="M1600.8 24.7 Q1601.2 20.6 1604.6 20 L1609.8 20 Q1613.2 20.6 1613.6 24.7 Z" fill="#000"/><path d="M1157.8 56.7 Q1163.2 50.6 1168.6 56.7 Q1163.2 62.6 1157.8 56.7 Z" fill="none" stroke="#111" stroke-width="0.9"/><circle cx="1163.5" cy="56.6" r="1.3" fill="#111"/><path d="M1159.4 60.8 L1167.8 52.6" stroke="#111" stroke-width="0.9"/><rect x="1188.6" y="52.3" width="6.8" height="2.6" fill="none" stroke="#000" stroke-width="1.1"/><rect x="1185.3" y="54.4" width="13.5" height="6.2" rx="0.8" fill="#000"/><rect x="1188.4" y="58.8" width="7.2" height="4.7" fill="#fff" stroke="#000" stroke-width="1.1"/><path d="M1219.6 51.3 L1225.8 51.3 Q1229.5 51.3 1229.5 55 L1229.5 59.4 Q1229.5 63.1 1225.8 63.1 L1224.2 63.1 L1222.7 64.5 L1221.2 63.1 L1219.6 63.1 Q1215.9 63.1 1215.9 59.4 L1215.9 55 Q1215.9 51.3 1219.6 51.3 Z" fill="none" stroke="#111" stroke-width="1.25"/><text x="1222.7" y="60.9" font-family="Liberation Sans" font-size="10.4" text-anchor="middle" fill="#111">?</text><circle cx="1247.5" cy="57.9" r="1.15" fill="#222"/><circle cx="1253.2" cy="57.9" r="1.15" fill="#222"/><circle cx="1258.9" cy="57.9" r="1.15" fill="#222"/><path d="M1445.4 57.1 L1452.2 57.1 L1448.8 60.8 Z" fill="#1a73e8"/><path d="M1539 55.3 L1545.6 55.3 L1542.3 59.4 Z" fill="#111"/><path d="M1575.8 54.4 L1572.2 58.2 L1575.8 62" fill="none" stroke="#aaa" stroke-width="1.1"/><path d="M1594.2 54.2 L1598.8 58.4 L1594.2 62.6" fill="none" stroke="#222" stroke-width="1.3"/><circle cx="95.6" cy="150.6" r="6.6" fill="#3e70d9"/><rect x="94.8" y="149.4" width="1.6" height="4.6" fill="#fff"/><circle cx="95.6" cy="147.3" r="0.9" fill="#fff"/><path d="M96.6 273.6 L99.7 270.2 L102.8 273.6" fill="none" stroke="#3a82b8" stroke-width="1.2"/><path d="M117.2 266.6 L117.2 271" stroke="#ff0000" stroke-width="1.6" stroke-linecap="round"/><path d="M114.3 269.4 L120.1 269.4 L117.2 276.2 Z" fill="#ff0000"/><g transform="rotate(120 117.2 276.1)"><path d="M117.2 266.6 L117.2 271" stroke="#ff0000" stroke-width="1.6" stroke-linecap="round"/><path d="M114.3 269.4 L120.1 269.4 L117.2 276.2 Z" fill="#ff0000"/></g><g transform="rotate(-120 117.2 276.1)"><path d="M117.2 266.6 L117.2 271" stroke="#ff0000" stroke-width="1.6" stroke-linecap="round"/><path d="M114.3 269.4 L120.1 269.4 L117.2 276.2 Z" fill="#ff0000"/></g><path d="M1571.8 143.3 L1580 143.3 M1576.6 139.8 L1580.1 143.3 L1576.6 146.8" fill="none" stroke="#333" stroke-width="1.2"/><rect x="1580.7" y="138.3" width="1.2" height="9.6" fill="#333"/><path d="M1571.4 186.6 L1574.65 190.2 L1577.9 186.6" fill="none" stroke="#444" stroke-width="1.1"/><path d="M1571.4 235.8 L1574.65 239.4 L1577.9 235.8" fill="none" stroke="#444" stroke-width="1.1"/><path d="M1571.4 417.6 L1574.65 421.20000000000005 L1577.9 417.6" fill="none" stroke="#444" stroke-width="1.1"/><path d="M1571.4 500.2 L1574.65 503.8 L1577.9 500.2" fill="none" stroke="#444" stroke-width="1.1"/><rect x="1564.4" y="441" width="7.2" height="2.6" fill="none" stroke="#000" stroke-width="1"/><rect x="1562.2" y="443.2" width="11.6" height="5" rx="0.8" fill="#000"/><rect x="1564.4" y="446.6" width="7.2" height="4" fill="#fff" stroke="#000" stroke-width="1"/><rect x="1564.4" y="464.4" width="7.2" height="2.6" fill="none" stroke="#000" stroke-width="1"/><rect x="1562.2" y="466.59999999999997" width="11.6" height="5" rx="0.8" fill="#000"/><rect x="1564.4" y="470.0" width="7.2" height="4" fill="#fff" stroke="#000" stroke-width="1"/><circle cx="1563.4" cy="528.6" r="1.1" fill="#222"/><circle cx="1567.9" cy="528.6" r="1.1" fill="#222"/><circle cx="1572.4" cy="528.6" r="1.1" fill="#222"/><circle cx="1563.4" cy="643.5" r="1.1" fill="#222"/><circle cx="1567.9" cy="643.5" r="1.1" fill="#222"/><circle cx="1572.4" cy="643.5" r="1.1" fill="#222"/><circle cx="1563.4" cy="699" r="1.1" fill="#222"/><circle cx="1567.9" cy="699" r="1.1" fill="#222"/><circle cx="1572.4" cy="699" r="1.1" fill="#222"/><circle cx="1563.4" cy="753.8" r="1.1" fill="#222"/><circle cx="1567.9" cy="753.8" r="1.1" fill="#222"/><circle cx="1572.4" cy="753.8" r="1.1" fill="#222"/><rect x="1272" y="594" width="1.4" height="185" fill="#cfcfcf"/><circle cx="1272.4" cy="579.6" r="15.2" fill="#e2e2e2"/><circle cx="1272.4" cy="578.9" r="14.6" fill="#fff" stroke="#e6e6e6" stroke-width="0.8"/><circle cx="1272.4" cy="706.3000000000001" r="15.2" fill="#e2e2e2"/><circle cx="1272.4" cy="705.6" r="14.6" fill="#fff" stroke="#e6e6e6" stroke-width="0.8"/><circle cx="1272.4" cy="760.9000000000001" r="15.2" fill="#e2e2e2"/><circle cx="1272.4" cy="760.2" r="14.6" fill="#fff" stroke="#e6e6e6" stroke-width="0.8"/><path d="M1266.2 580.3 L1270.6 583.6 L1279.1 574.8" fill="none" stroke="#555" stroke-width="1.2"/><circle cx="1272.4" cy="650.7" r="15.2" fill="#d8d8d8"/><circle cx="1272.4" cy="650" r="14.6" fill="#0064a1"/><path d="M1272.7 657.2 L1268.5 649 A4.7 4.7 0 1 1 1276.9 649 Z" fill="#fff"/><circle cx="1272.7" cy="646.2" r="1.9" fill="#0064a1"/><circle cx="1300" cy="602.6" r="4.2" fill="#20874b"/><circle cx="1300" cy="657.6" r="4.2" fill="#0a4a8c"/></svg>
<div style="position:absolute;left:1546.53px;top:9.23px;font-family:'Liberation Sans',sans-serif;font-size:6.83px;line-height:10px;font-weight:bold;color:#fff;white-space:nowrap;transform:scaleX(1.2050);transform-origin:0 0;">10</div>
<div style="position:absolute;left:1584.36px;top:9.23px;font-family:'Liberation Sans',sans-serif;font-size:6.83px;line-height:10px;font-weight:bold;color:#fff;white-space:nowrap;transform:scaleX(1.2216);transform-origin:0 0;">292</div>
<div style="position:absolute;left:350px;top:66px;width:134px;height:69px;border:10px solid #e60b0b;box-sizing:border-box"></div>
<div style="position:absolute;left:1438px;top:72px;width:120px;height:138px;background:#fff;border-radius:3px;box-shadow:0 1px 4px rgba(0,0,0,0.3)"></div>
<div style="position:absolute;left:1444.38px;top:77.97px;font-family:'Liberation Sans',sans-serif;font-size:12.50px;line-height:17px;font-weight:normal;color:#2a7ab8;white-space:nowrap;transform:scaleX(0.9471);transform-origin:0 0;">Approve &amp; Next</div>
<div style="position:absolute;left:1444.38px;top:105.77px;font-family:'Liberation Sans',sans-serif;font-size:12.50px;line-height:17px;font-weight:normal;color:#2a7ab8;white-space:nowrap;transform:scaleX(0.9570);transform-origin:0 0;">Approve</div>
<div style="position:absolute;left:1443.41px;top:133.07px;font-family:'Liberation Sans',sans-serif;font-size:12.50px;line-height:17px;font-weight:normal;color:#2a7ab8;white-space:nowrap;transform:scaleX(0.9694);transform-origin:0 0;">Return Invoice</div>
<div style="position:absolute;left:1443.39px;top:160.27px;font-family:'Liberation Sans',sans-serif;font-size:12.50px;line-height:17px;font-weight:normal;color:#2a7ab8;white-space:nowrap;transform:scaleX(0.9834);transform-origin:0 0;">Forward...</div>
<div style="position:absolute;left:1443.41px;top:188.27px;font-family:'Liberation Sans',sans-serif;font-size:12.50px;line-height:17px;font-weight:normal;color:#2a7ab8;white-space:nowrap;transform:scaleX(0.9697);transform-origin:0 0;">Reject Invoice</div></body></html>
